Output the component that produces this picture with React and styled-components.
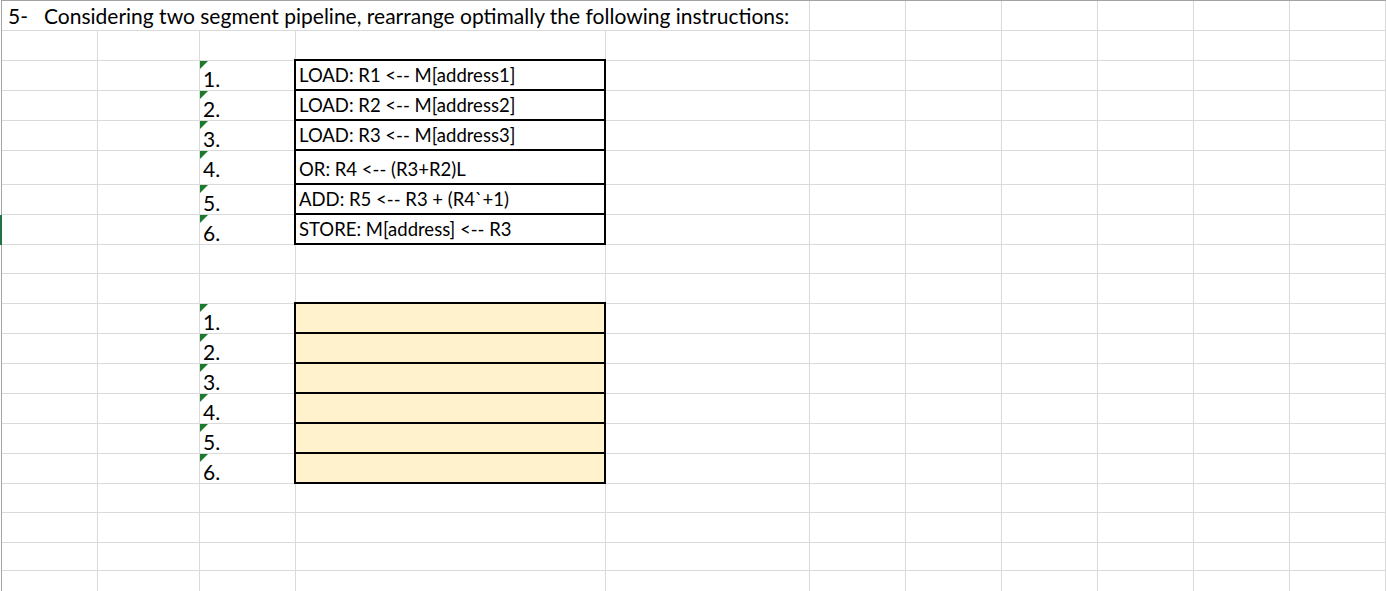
import React from 'react';
import styled, { createGlobalStyle } from 'styled-components';

const GlobalStyle = createGlobalStyle`
    html, body {
        margin: 0;
        padding: 0;
        background: #ffffff;
        overflow: hidden;
    }

    body {
        font-family: Lato, "Open Sans", sans-serif;
        color: #000000;
    }
`;

// alturas de filas tal como aparecen en la hoja (incluye la línea de la cuadrícula)
const rowHeights = [30, 30, 30, 30, 30, 34, 30, 30, 29, 30, 30, 30, 30, 30, 30, 30, 29, 30, 28, 30];
const colWidths = [96, 102, 96, 310, 204, 96, 96, 96, 96, 96, 96];

const instructions = [
    'LOAD: R1 <-- M[address1]',
    'LOAD: R2 <-- M[address2]',
    'LOAD: R3 <-- M[address3]',
    'OR: R4 <-- (R3+R2)L',
    'ADD: R5 <-- R3 + (R4`+1)',
    'STORE: M[address] <-- R3',
];

const Sheet = styled.div`
    display: grid;
    grid-template-columns: ${colWidths.map(w => `${w}px`).join(' ')};
    grid-template-rows: ${rowHeights.map(h => `${h}px`).join(' ')};
    margin-left: 1px;
    border-left: 1px solid #a3a3a3;
    border-top: 1px solid #a3a3a3;
    width: fit-content;
`;

const Cell = styled.div`
    grid-row: ${props => props.$row};
    grid-column: ${props => props.$col} / span ${props => props.$span || 1};
    box-sizing: border-box;
    border-right: 1px solid #dadada;
    border-bottom: 1px solid #dadada;
    box-shadow: ${props => props.$selected ? '-2px 0 0 #217346' : 'none'};
`;

const TitleCell = styled(Cell)`
    display: flex;
    align-items: flex-end;
    padding: 0 0 4px 6px;
    font-size: 21px;
    line-height: 21px;
    white-space: nowrap;
`;

const TitleNumber = styled.span`
    display: inline-block;
    width: 36px;
`;

const LabelCell = styled(Cell)`
    display: flex;
    flex-direction: column;
    justify-content: space-between;
    padding: 0 0 6px 3px;
    font-size: 21px;
    line-height: 20px;
`;

const Marker = styled.span`
    display: block;
    width: 0;
    height: 0;
    margin-left: -3px;
    border-top: 8px solid #1d7a2c;
    border-right: 8px solid transparent;
`;

const Table = styled.div`
    grid-row: ${props => props.$row} / span 6;
    grid-column: 4;
    margin: -2px 0 0 -2px;
    display: flex;
    flex-direction: column;
    box-sizing: border-box;
    border: 2px solid #000000;
    border-bottom: none;
    background: ${props => props.$fill};
`;

const TableRow = styled.div`
    height: ${props => props.$height}px;
    box-sizing: border-box;
    border-bottom: 2px solid #000000;
    display: flex;
    align-items: flex-end;
    padding: 0 0 4px 3px;
    font-size: 18.5px;
    line-height: 19px;
    white-space: nowrap;
`;

const firstList = [3, 4, 5, 6, 7, 8];
const secondList = [11, 12, 13, 14, 15, 16];

const App = () => {
    const cells = [];

    rowHeights.forEach((h, r) => {
        const row = r + 1;
        colWidths.forEach((w, c) => {
            const col = c + 1;
            if (row === 1 && col <= 5) return;

            const listIndex = col === 3 ? (firstList.indexOf(row) !== -1 ? firstList.indexOf(row) : secondList.indexOf(row)) : -1;

            if (listIndex !== -1) {
                cells.push(
                    <LabelCell key={`${row}-${col}`} $row={row} $col={col}>
                        <Marker />
                        <span>{listIndex + 1}.</span>
                    </LabelCell>
                );
            } else {
                cells.push(<Cell key={`${row}-${col}`} $row={row} $col={col} $selected={row === 8 && col === 1} />);
            }
        });
    });

    return (
        <>
            <GlobalStyle />
            <Sheet>
                <TitleCell $row={1} $col={1} $span={5}>
                    <TitleNumber>5-</TitleNumber>
                    Considering two segment pipeline, rearrange optimally the following instructions:
                </TitleCell>
                { cells }
                <Table $row={3} $fill="#ffffff">
                    { instructions.map((text, i) => (
                        <TableRow key={i} $height={rowHeights[i + 2]}>{ text }</TableRow>
                    )) }
                </Table>
                <Table $row={11} $fill="#fff2cc">
                    { secondList.map(row => (
                        <TableRow key={row} $height={rowHeights[row - 1]} />
                    )) }
                </Table>
            </Sheet>
        </>
    );
};

export default App;
